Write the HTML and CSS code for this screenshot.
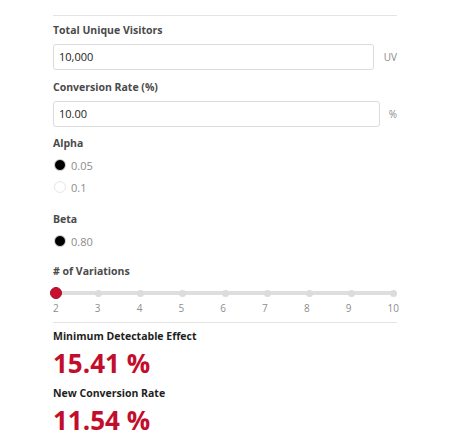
FILE: index.html
```html
<!DOCTYPE html>
<html>
<head>
<meta charset="utf-8">
<link rel="stylesheet" href="styles.css">
</head>
<body>
<div class="calc">
  <div class="rule top"></div>
  <div class="label l1">Total Unique Visitors</div>
  <div class="field-row">
    <div class="input w1">10,000</div>
    <span class="unit">UV</span>
  </div>
  <div class="label l2">Conversion Rate (%)</div>
  <div class="field-row">
    <div class="input w2">10.00</div>
    <span class="unit">%</span>
  </div>
  <div class="label l3">Alpha</div>
  <div class="radio first"><span class="dot on"></span>0.05</div>
  <div class="radio"><span class="dot"></span>0.1</div>
  <div class="label l4">Beta</div>
  <div class="radio first"><span class="dot on"></span>0.80</div>
  <div class="label l5"># of Variations</div>
  <div class="slider">
    <div class="track">
      <span class="tick"></span><span class="tick"></span><span class="tick"></span>
      <span class="tick"></span><span class="tick"></span><span class="tick"></span>
      <span class="tick"></span><span class="tick"></span><span class="tick"></span>
      <span class="thumb"></span>
    </div>
    <div class="nums">
      <span>2</span><span>3</span><span>4</span><span>5</span><span>6</span><span>7</span><span>8</span><span>9</span><span>10</span>
    </div>
  </div>
  <div class="rule bottom"></div>
  <div class="label dark l6">Minimum Detectable Effect</div>
  <div class="big b1">15.41 %</div>
  <div class="label dark l7">New Conversion Rate</div>
  <div class="big b2">11.54 %</div>
</div>
</body>
</html>
```

FILE: styles.css
```css
html, body {
  margin: 0;
  padding: 0;
  background: #fff;
}
body {
  font-family: "Open Sans", "Liberation Sans", sans-serif;
}
.calc {
  margin-left: 53px;
  width: 344px;
  padding-top: 15px;
}
.rule {
  height: 1px;
  background: #e4e4e4;
}
.label {
  font-size: 10.5px;
  font-weight: 700;
  color: #4a4a4a;
  line-height: 16px;
}
.label.dark { color: #1e1e1e; }
.l1 { margin-top: 6px; }
.l2 { margin-top: 9px; }
.l3 { margin-top: 8px; }
.l4 { margin-top: 13px; }
.l5 { margin-top: 11px; }
.l6 { margin-top: 5px; }
.l7 { margin-top: 4px; }
.field-row {
  display: flex;
  align-items: center;
  margin-top: 6px;
}
.input {
  box-sizing: border-box;
  height: 26px;
  border: 1px solid #dcdcdc;
  border-radius: 3px;
  padding-left: 5px;
  font-size: 11px;
  line-height: 24px;
  color: #222;
}
.w1 { width: 321px; }
.w2 { width: 327px; }
.unit {
  margin-left: auto;
  font-size: 10px;
  color: #8a8a8a;
}
.radio {
  display: flex;
  align-items: center;
  height: 22px;
  font-size: 11px;
  color: #8c8c8c;
}
.radio.first { margin-top: 3px; }
.radio .dot {
  box-sizing: border-box;
  width: 12px;
  height: 12px;
  border-radius: 50%;
  border: 1px solid #e6e6e6;
  margin-left: 1px;
  margin-right: 5px;
}
.radio .dot.on {
  background: #000;
  border: 1px solid #d8d8d8;
  box-shadow: inset 0 0 0 1px #000;
}
.slider {
  margin-top: 12px;
}
.track {
  position: relative;
  height: 4px;
  background: #dedede;
  border-radius: 2px;
  display: flex;
  justify-content: space-between;
  align-items: center;
  margin-top: 6px;
}
.tick {
  width: 7px;
  height: 7px;
  border-radius: 50%;
  background: #dcdcdc;
}
.tick:first-child { visibility: hidden; }
.thumb {
  position: absolute;
  left: -3px;
  top: -4px;
  width: 12px;
  height: 12px;
  border-radius: 50%;
  background: #c8102e;
  border: 1px solid #a70d26;
  box-sizing: border-box;
}
.nums {
  display: flex;
  justify-content: space-between;
  margin: 6px -2px 0 0;
  font-size: 10px;
  color: #8e8e8e;
  line-height: 14px;
}
.bottom { margin-top: 7px; }
.big {
  font-size: 26px;
  font-weight: 700;
  color: #c20e2c;
  line-height: 36px;
}
.b1 { margin-top: 1px; }
.b2 { margin-top: 1px; }
```
